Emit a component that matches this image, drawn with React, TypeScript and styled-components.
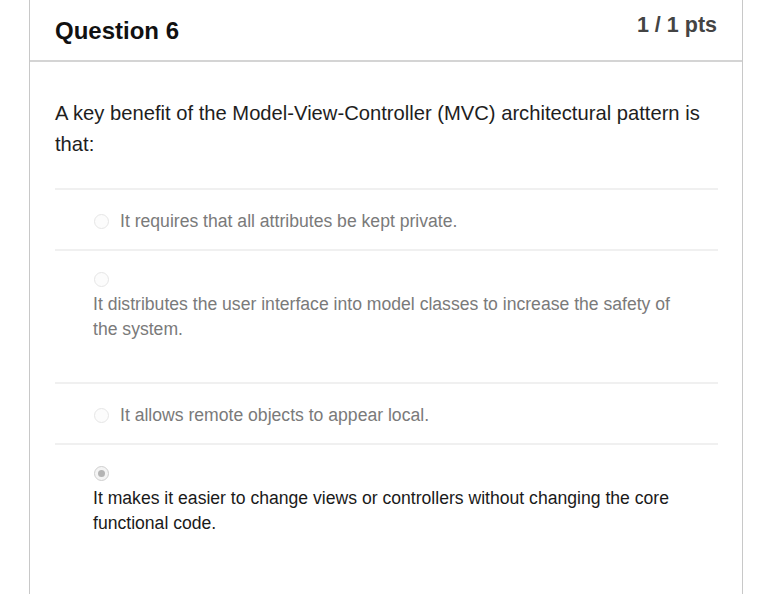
import styled, { createGlobalStyle } from 'styled-components'

const GlobalStyle = createGlobalStyle`
  body {
    margin: 0;
    background: #ffffff;
    font-family: "Liberation Sans", Arial, sans-serif;
  }
`

type Answer = {
  text: string
  selected?: boolean
  stacked?: boolean
}

const answers: Answer[] = [
  { text: 'It requires that all attributes be kept private.' },
  {
    text: 'It distributes the user interface into model classes to increase the safety of the system.',
    stacked: true,
  },
  { text: 'It allows remote objects to appear local.' },
  {
    text: 'It makes it easier to change views or controllers without changing the core functional code.',
    selected: true,
    stacked: true,
  },
]

const Card = styled.div`
  margin-left: 29px;
  width: 714px;
  height: 594px;
  border-left: 1px solid #c8c8c8;
  border-right: 1px solid #c8c8c8;
  box-sizing: border-box;
`

const Header = styled.div`
  display: flex;
  justify-content: space-between;
  align-items: flex-start;
  height: 60px;
  padding: 0 25px 0 25px;
  border-bottom: 2px solid #d4d4d4;
  box-sizing: content-box;
`

const Title = styled.h2`
  margin: 17px 0 0 0;
  font-size: 24px;
  font-weight: bold;
  color: #111;
`

const Points = styled.div`
  margin-top: 13px;
  font-size: 21.5px;
  font-weight: bold;
  color: #444;
`

const Body = styled.div`
  padding: 36px 24px 0 25px;
`

const QuestionText = styled.p`
  margin: 0 0 28px 0;
  max-width: 660px;
  font-size: 20.2px;
  line-height: 31px;
  color: #1e1e1e;
`

const AnswerList = styled.div`
  display: flex;
  flex-direction: column;
`

const AnswerRow = styled.div<{ $stacked?: boolean }>`
  border-top: 2px solid #f0f0f0;
  padding: ${(p) => (p.$stacked ? '19px 0 40px 38px' : '19px 0 15px 38px')};
  display: flex;
  flex-direction: ${(p) => (p.$stacked ? 'column' : 'row')};
  align-items: ${(p) => (p.$stacked ? 'flex-start' : 'center')};
`

const Radio = styled.span<{ $selected?: boolean; $stacked?: boolean }>`
  position: relative;
  width: 15px;
  height: 15px;
  border-radius: 50%;
  border: 1px solid ${(p) => (p.$selected ? '#cfcfcf' : '#e6e6e6')};
  background: ${(p) => (p.$selected ? '#f4f4f4' : '#fcfcfc')};
  box-sizing: border-box;
  margin: ${(p) => (p.$stacked ? '2px 0 5px 1px' : '0 11px 0 1px')};
  flex-shrink: 0;

  &::after {
    content: '';
    display: ${(p) => (p.$selected ? 'block' : 'none')};
    position: absolute;
    left: 3px;
    top: 3px;
    width: 7px;
    height: 7px;
    border-radius: 50%;
    background: #b4b4b4;
  }
`

const AnswerText = styled.span<{ $selected?: boolean }>`
  font-size: 17.6px;
  line-height: 25px;
  color: ${(p) => (p.$selected ? '#1a1a1a' : '#7a7a7a')};
  max-width: 592px;
`

export default function App() {
  return (
    <>
      <GlobalStyle />
      <Card>
        <Header>
          <Title>Question 6</Title>
          <Points>1 / 1 pts</Points>
        </Header>
        <Body>
          <QuestionText>
            A key benefit of the Model-View-Controller (MVC) architectural pattern is that:
          </QuestionText>
          <AnswerList>
            {answers.map((a, i) => (
              <AnswerRow key={i} $stacked={a.stacked}>
                <Radio $selected={a.selected} $stacked={a.stacked} />
                <AnswerText $selected={a.selected}>{a.text}</AnswerText>
              </AnswerRow>
            ))}
          </AnswerList>
        </Body>
      </Card>
    </>
  )
}
